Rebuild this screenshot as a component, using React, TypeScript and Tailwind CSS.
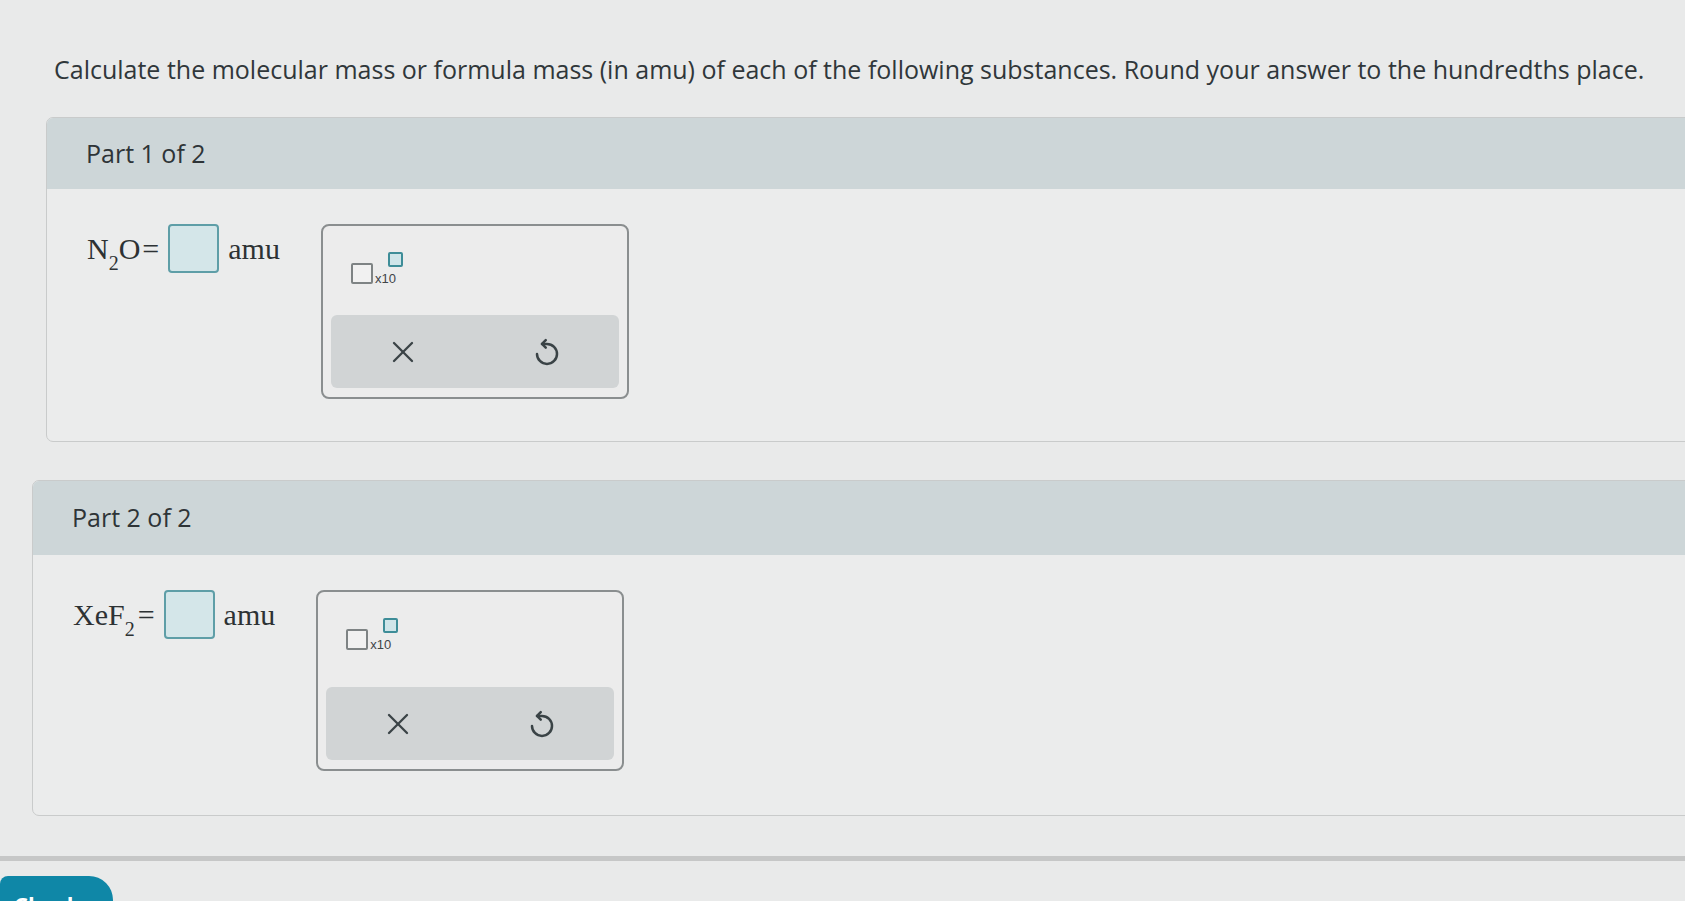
const UndoIcon = () => (
  <svg width="30" height="30" viewBox="0 0 24 24" fill="none" stroke="#3a4346" strokeWidth="2" strokeLinecap="round" strokeLinejoin="round">
    <path d="M8 5.5h4a8 8 0 1 1 -8 8" />
    <path d="M11 2.5L8 5.5L11 8.5" />
  </svg>
);

const XIcon = () => (
  <svg width="22" height="22" viewBox="0 0 22 22" fill="none" stroke="#3a4346" strokeWidth="2.3" strokeLinecap="round">
    <path d="M2 2L20 20" />
    <path d="M20 2L2 20" />
  </svg>
);

const Popup = ({ h }: { h: string }) => (
  <div className={`w-[308px] ${h} shrink-0 flex flex-col border-2 border-[#8a8e8f] rounded-[8px] bg-[#ececec]`}>
    <div className="flex-1 flex items-start pl-[28px] pt-[26px]">
      <div className="mt-[11px] w-[22px] h-[21px] border-2 border-[#7e8384] rounded-[2px] bg-[#f1f1f1]" />
      <span className="mt-[20px] ml-[2px] text-[13px] leading-none text-[#3f4548] font-['Liberation_Sans',sans-serif]">x10</span>
      <div className="ml-[-8px] w-[15px] h-[15px] border-2 border-[#3e8d98] bg-[#cfe5e9] rounded-[2px]" />
    </div>
    <div className="mx-[8px] mb-[9px] h-[73px] grid grid-cols-2 place-items-center bg-[#d1d4d5] rounded-[6px]">
      <XIcon />
      <UndoIcon />
    </div>
  </div>
);

const AnswerBox = () => (
  <div className="mx-[9px] w-[51px] h-[49px] border-2 border-[#5e9ea7] bg-[#d4e6e9] rounded-[4px]" />
);

const Part = ({
  title,
  formula,
  left,
  bandH,
  bodyH,
  popupH,
}: {
  title: string;
  formula: React.ReactNode;
  left: string;
  bandH: string;
  bodyH: string;
  popupH: string;
}) => (
  <div className={`${left} mr-[-12px] border border-[#c9cbcb] rounded-[7px] bg-[#ebecec] overflow-hidden`}>
    <div className={`${bandH} flex items-center pl-[39px] bg-[#cdd6d8] text-[25px] text-[#2e3437] font-['Open_Sans',sans-serif]`}>
      {title}
    </div>
    <div className={`${bodyH} flex items-start gap-[41px] pl-[40px] pt-[35px]`}>
      <div className="flex items-center h-[49px] text-[30px] text-[#2d3234] font-['Liberation_Serif',serif] whitespace-nowrap">
        {formula}
        <AnswerBox />
        <span>amu</span>
      </div>
      <Popup h={popupH} />
    </div>
  </div>
);

export default function App() {
  return (
    <div className="w-[1685px] h-[901px] overflow-hidden bg-[#e9eaea]">
      <h1 className="pt-[53px] pl-[54px] text-[25px] leading-[32px] text-[#30373a] font-['Open_Sans',sans-serif] whitespace-nowrap">
        Calculate the molecular mass or formula mass (in amu) of each of the following substances. Round your answer to the
        hundredths place.
      </h1>

      <div className="mt-[32px] flex flex-col gap-[38px]">
        <Part
          title="Part 1 of 2"
          left="ml-[46px]"
          bandH="h-[71px]"
          bodyH="h-[252px]"
          popupH="h-[175px]"
          formula={
            <span>
              N<sub className="text-[20px] align-[-6px]">2</sub>O<span className="ml-[2px]">=</span>
            </span>
          }
        />
        <Part
          title="Part 2 of 2"
          left="ml-[32px]"
          bandH="h-[74px]"
          bodyH="h-[260px]"
          popupH="h-[181px]"
          formula={
            <span>
              XeF<sub className="text-[20px] align-[-6px]">2</sub>
              <span className="ml-[3px]">=</span>
            </span>
          }
        />
      </div>

      <div className="mt-[40px] h-[5px] bg-[#c6c7c7]" />

      <div className="mt-[15px] w-[113px] h-[60px] rounded-tr-[24px] rounded-tl-[8px] bg-[#0f87a7] pl-[14px] pt-[14px] text-[22px] leading-[28px] font-bold text-white font-['Open_Sans',sans-serif]">
        Check
      </div>
    </div>
  );
}
